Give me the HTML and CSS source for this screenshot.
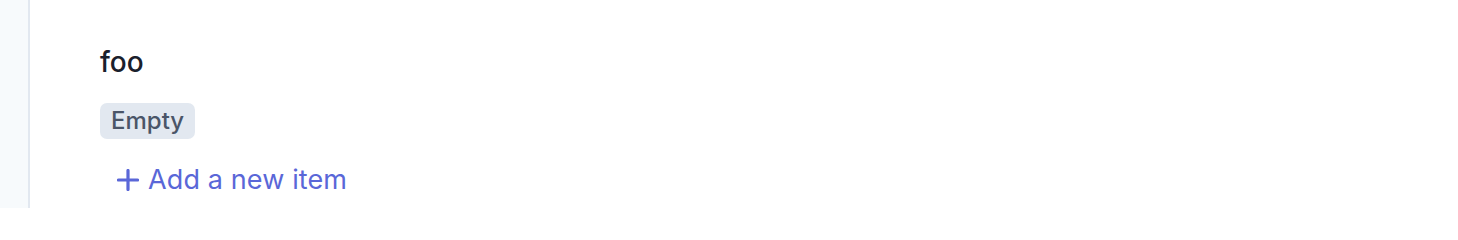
FILE: index.html
```html
<!DOCTYPE html>
<html>
<head>
<meta charset="utf-8">
<link rel="stylesheet" href="styles.css">
</head>
<body>
<div class="layout">
  <aside class="sidebar"></aside>
  <main class="content">
    <h2 class="field-label">foo</h2>
    <div class="badge-row"><span class="badge">Empty</span></div>
    <button class="add-btn" type="button">
      <svg class="add-icon" viewBox="0 0 22 22" width="22" height="22" aria-hidden="true">
        <path d="M11 1.5v19M1.5 11h19" stroke="currentColor" stroke-width="3.2" stroke-linecap="round" fill="none"/>
      </svg>
      <span>Add a new item</span>
    </button>
  </main>
</div>
</body>
</html>
```

FILE: styles.css
```css
html, body {
  margin: 0;
  padding: 0;
  background: #ffffff;
  font-family: Inter, "Noto Sans", "Liberation Sans", sans-serif;
}

.layout {
  display: flex;
  min-height: 208px;
}

.sidebar {
  width: 28px;
  flex: 0 0 28px;
  background: #f7fafc;
  border-right: 2px solid #e2e8f0;
}

.content {
  flex: 1;
  padding: 44px 0 0 70px;
}

.field-label {
  margin: 0;
  font-size: 28px;
  line-height: 36px;
  font-weight: 500;
  color: #1a202c;
}

.badge-row {
  margin-top: 23px;
  display: flex;
}

.badge {
  display: inline-block;
  background: #e2e8f0;
  color: #4a5568;
  font-size: 24px;
  font-weight: 500;
  line-height: 28px;
  padding: 4px 11px;
  border-radius: 7px;
}

.add-btn {
  margin-top: 23px;
  margin-left: 17px;
  display: flex;
  align-items: center;
  gap: 9px;
  background: none;
  border: 0;
  padding: 0;
  font-family: inherit;
  font-size: 27px;
  line-height: 36px;
  letter-spacing: 0.12px;
  color: #5a67d8;
  cursor: pointer;
}

.add-icon {
  display: block;
}
```
